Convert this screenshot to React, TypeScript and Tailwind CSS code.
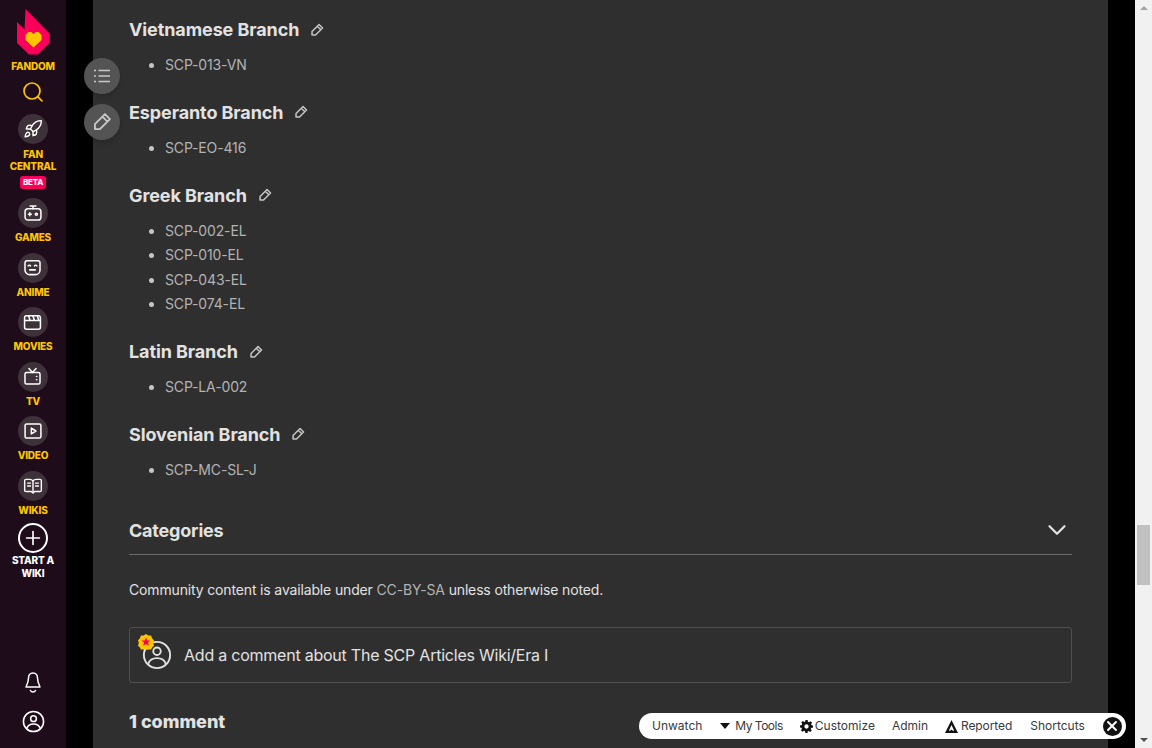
import { Search, Rocket, Plus, ChevronDown, X } from 'lucide-react';
import type { ReactNode } from 'react';

const font = "font-['Inter','Liberation_Sans',sans-serif]";

function GameIcon() {
  return (
    <svg viewBox="0 0 24 24" className="w-[20px] h-[20px]" fill="none" stroke="currentColor" strokeWidth="1.8" strokeLinejoin="round" strokeLinecap="round">
      <rect x="2.500" y="7" width="19" height="13.500" rx="3.500" />
      <path d="M12 7V3.500M8.500 3.500h7" />
      <path d="M6.500 13.500h3.500M8.200 11.800v3.400" />
      <circle cx="16" cy="13.500" r="1.300" />
    </svg>
  );
}

function AnimeIcon() {
  return (
    <svg viewBox="0 0 24 24" className="w-[19px] h-[19px]" fill="none" stroke="currentColor" strokeWidth="1.9" strokeLinecap="round" strokeLinejoin="round">
      <path d="M5 3.500h14a2.500 2.500 0 0 1 2.500 2.500v9a6 6 0 0 1-6 6h-7a6 6 0 0 1-6-6V6A2.500 2.500 0 0 1 5 3.500z" />
      <path d="M6.500 10c.7-1 2.300-1 3 0M14.500 10c.7-1 2.300-1 3 0M8.500 15h7" />
    </svg>
  );
}

function MovieIcon() {
  return (
    <svg viewBox="0 0 24 24" className="w-[19px] h-[19px]" fill="none" stroke="currentColor" strokeWidth="1.9" strokeLinejoin="round" strokeLinecap="round">
      <rect x="2" y="3.500" width="20" height="17" rx="2.500" />
      <path d="M2 9.500h20M7 3.500l2 6M12.500 3.500l2 6M18 3.500l2 6" />
    </svg>
  );
}

function TvIcon() {
  return (
    <svg viewBox="0 0 24 24" className="w-[19px] h-[19px]" fill="none" stroke="currentColor" strokeWidth="1.9" strokeLinejoin="round" strokeLinecap="round">
      <rect x="2.500" y="7" width="19" height="14.500" rx="2" />
      <path d="M7.500 2l4.500 5 4.500-5" />
      <path d="M17 12h.5M17 16h.5" />
    </svg>
  );
}

function VideoIcon() {
  return (
    <svg viewBox="0 0 24 24" className="w-[20px] h-[20px]" fill="none" stroke="currentColor" strokeWidth="1.8" strokeLinejoin="round">
      <rect x="2.500" y="3.500" width="19" height="17" rx="2" />
      <path d="M10 8.500l5.500 3.500-5.500 3.500z" />
    </svg>
  );
}

function BookIcon() {
  return (
    <svg viewBox="0 0 24 24" className="w-[20px] h-[20px]" fill="none" stroke="currentColor" strokeWidth="1.700" strokeLinejoin="round" strokeLinecap="round">
      <path d="M12 6c-1-1.500-2.500-2-4-2H3.500A1.500 1.500 0 0 0 2 5.500V17a1.500 1.500 0 0 0 1.500 1.500H10l2 2 2-2h6.500A1.500 1.500 0 0 0 22 17V5.500A1.500 1.500 0 0 0 20.500 4H16c-1.500 0-3 .5-4 2zM12 6v12" />
      <path d="M5.500 8.500h3.500M5.500 12h3.500M15 8.500h3.500M15 12h3.500" />
    </svg>
  );
}

function BellIcon() {
  return (
    <svg viewBox="0 0 16 22" className="w-[16px] h-[22px] text-white" fill="none" stroke="currentColor" strokeWidth="1.500" strokeLinejoin="round" strokeLinecap="round">
      <path d="M8 1C5 1 3.500 3.500 3.500 6c0 3-1 6-2.500 9h14c-1.500-3-2.500-6-2.500-9C12.500 3.500 11 1 8 1z" />
      <path d="M5.500 18.500c.8 2 4.200 2 5 0" />
    </svg>
  );
}

function PencilIcon({ className, strokeWidth = 2.200 }: { className: string; strokeWidth?: number }) {
  return (
    <svg viewBox="0 0 24 24" className={className} fill="none" stroke="currentColor" strokeWidth={strokeWidth} strokeLinejoin="round">
      <path d="M3.500 20.500v-6L15.500 2.500l6 6-12 12zM12.500 5.500l6 6" />
    </svg>
  );
}

function UserIcon({ className, strokeWidth = 1.600 }: { className: string; strokeWidth?: number }) {
  return (
    <svg viewBox="0 0 24 24" className={className} fill="none" stroke="currentColor" strokeWidth={strokeWidth} strokeLinecap="round">
      <circle cx="12" cy="12" r="10.500" />
      <circle cx="12" cy="9" r="3" />
      <path d="M5 19c1-3 4-4.500 7-4.500s6 1.500 7 4.500" />
    </svg>
  );
}

const navItems: { label: string; icon: ReactNode }[] = [
  { label: 'GAMES', icon: <GameIcon /> },
  { label: 'ANIME', icon: <AnimeIcon /> },
  { label: 'MOVIES', icon: <MovieIcon /> },
  { label: 'TV', icon: <TvIcon /> },
  { label: 'VIDEO', icon: <VideoIcon /> },
  { label: 'WIKIS', icon: <BookIcon /> },
];

function Sidebar() {
  return (
    <aside className="w-[66px] shrink-0 h-full bg-[#1e0c1b] flex flex-col items-center tracking-[-0.2px]">
      <svg viewBox="0 0 34 46" className="w-[34px] h-[46px] mt-[9px]">
        <g transform="translate(1 0)">
          <path d="M8.500 0L32.500 24.500V34L21 45.500H12L0 34V13L7.500 20.500z" fill="#fa005a" />
          <path d="M16.500 38.500L8.500 31v-5l3-3h2.800l2.200 2 2.200-2H21.500l3 3v5z" fill="#ffc500" />
        </g>
      </svg>
      <span className="mt-[5px] text-[10px] leading-[13px] font-extrabold text-[#ffc500]">FANDOM</span>
      <Search className="mt-[7px] w-[24px] h-[24px] text-[#ffc500]" strokeWidth={1.700} />
      <div className="mt-[10px] w-[30px] h-[30px] rounded-full bg-[#3e3139] text-white flex items-center justify-center">
        <Rocket className="w-[20px] h-[20px]" strokeWidth={1.700} />
      </div>
      <span className="mt-[4px] text-[10px] leading-[12px] font-extrabold text-[#ffc500] text-center">FAN<br />CENTRAL</span>
      <span className="mt-[4px] rounded-[3px] bg-[#fa005a] px-[3px] text-[8px] leading-[13px] font-extrabold text-white">BETA</span>
      <div className="mt-[9px] flex flex-col items-center">
        {navItems.map((item) => (
          <div key={item.label} className="h-[54.500px] flex flex-col items-center">
            <div className="w-[30px] h-[30px] rounded-full bg-[#3e3139] text-white flex items-center justify-center">
              {item.icon}
            </div>
            <span className="mt-[3px] text-[10px] leading-[13px] font-extrabold text-[#ffc500]">{item.label}</span>
          </div>
        ))}
      </div>
      <div className="-mt-[2px] w-[30px] h-[30px] rounded-full border-2 border-white text-white flex items-center justify-center">
        <Plus className="w-[22px] h-[22px]" strokeWidth={1.800} />
      </div>
      <span className="mt-[1px] text-[10px] leading-[13px] font-extrabold text-white text-center whitespace-nowrap">START A<br />WIKI</span>
      <div className="mt-auto">
        <BellIcon />
      </div>
      <UserIcon className="mt-[16px] mb-[15px] w-[23px] h-[23px] text-white" />
    </aside>
  );
}

const sections = [
  { title: 'Vietnamese Branch', items: ['SCP-013-VN'] },
  { title: 'Esperanto Branch', items: ['SCP-EO-416'] },
  { title: 'Greek Branch', items: ['SCP-002-EL', 'SCP-010-EL', 'SCP-043-EL', 'SCP-074-EL'] },
  { title: 'Latin Branch', items: ['SCP-LA-002'] },
  { title: 'Slovenian Branch', items: ['SCP-MC-SL-J'] },
];

function Article() {
  return (
    <main className="w-[1015px] shrink-0 h-full overflow-hidden bg-[#2f2f2f] pl-[36px] pr-[36px] pt-[17px]">
      {sections.map((section) => (
        <section key={section.title} className="mb-[22.200px]">
          <h2 className="flex items-center gap-[11px] text-[18px] leading-[25px] font-bold tracking-[-0.1px] text-[#e2e2e2]">
            {section.title}
            <PencilIcon className="w-[14px] h-[14px] text-[#c5c5c5]" strokeWidth={2.600} />
          </h2>
          <ul className="mt-[11px] pl-[36px] list-disc text-[14px] leading-[24.600px] tracking-[-0.15px] text-[#b3b3b3] marker:text-[#c5c5c5]">
            {section.items.map((item) => (
              <li key={item}>{item}</li>
            ))}
          </ul>
        </section>
      ))}
      <div className="mt-[35px] flex items-center justify-between border-b border-[#6a6a6a] pb-[11px]">
        <h2 className="text-[18px] leading-[25px] font-bold tracking-[-0.2px] text-[#e2e2e2]">Categories</h2>
        <ChevronDown className="w-[30px] h-[30px] -my-1 text-[#e2e2e2]" strokeWidth={1.800} />
      </div>
      <p className="mt-[25px] text-[14px] leading-[20px] tracking-[-0.15px] text-[#e2e2e2]">
        Community content is available under <span className="text-[#b3b3b3]">CC-BY-SA</span> unless otherwise noted.
      </p>
      <div className="mt-[27px] h-[56px] rounded-[3px] border border-[#4f4f4f] flex items-center pl-[12px] gap-[12px]">
        <div className="relative mt-[1px] w-[30px] h-[30px] text-[#e2e2e2]">
          <UserIcon className="w-[30px] h-[30px]" strokeWidth={1.500} />
          <svg viewBox="0 0 16 16" className="absolute -left-[4px] -top-[6px] w-[16px] h-[16px]">
            <path d="M8 0l2.300 1.600 2.800 0 .9 2.600L16 6.300l-.8 2.700.8 2.700-2 1.700-.9 2.100-2.800-.1L8 16l-2.300-.6-2.800.1L2 13.400 0 11.700.8 9 0 6.300l2-2.100.9-2.600 2.800 0z" fill="#ffc500" />
            <path d="M8 3.500l1.300 3h3.200l-2.500 2 .9 3.200L8 9.900l-2.900 1.800.9-3.200-2.500-2h3.200z" fill="#fa005a" />
          </svg>
        </div>
        <span className="text-[16px] tracking-[-0.23px] text-[#e2e2e2]">Add a comment about The SCP Articles Wiki/Era I</span>
      </div>
      <h2 className="mt-[26px] text-[18px] leading-[25px] font-extrabold text-[#e2e2e2]">1 comment</h2>
    </main>
  );
}

function Toolbar() {
  return (
    <div className="absolute left-[639px] top-[713px] h-[26px] rounded-full bg-white pl-[13px] pr-[4px] flex items-center text-[12px] text-[#3a3a3a] whitespace-nowrap">
      <span>Unwatch</span>
      <svg viewBox="0 0 10 6" className="ml-[18px] mr-[5px] w-[10px] h-[6px]">
        <path d="M0 0h10L5 6z" fill="#111" />
      </svg>
      <span className="tracking-[-0.5px]">My Tools</span>
      <svg viewBox="0 0 24 24" className="ml-[17px] mr-[2px] w-[13px] h-[13px]">
        <path fillRule="evenodd" fill="#111" d="M10 0h4l.7 3.300 2 .8L19.500 2.300l2.800 2.800-1.800 2.800.8 2L24 10v4l-3.300.7-.8 2 1.800 2.800-2.800 2.800-2.800-1.800-2 .8L14 24h-4l-.7-3.300-2-.8-2.800 1.800-2.800-2.800 1.800-2.800-.8-2L0 14v-4l3.300-.7.8-2-1.800-2.800 2.800-2.800 2.800 1.800 2-.8zM12 8a4 4 0 1 0 0 8 4 4 0 0 0 0-8z" />
      </svg>
      <span>Customize</span>
      <span className="ml-[17px]">Admin</span>
      <svg viewBox="0 0 24 24" className="ml-[17px] mr-[3px] w-[13px] h-[13px]">
        <path fillRule="evenodd" fill="#111" d="M12 0l12 24H0zM12 9L7 20h3l.7-2h2.600l.7 2h3z" />
      </svg>
      <span className="tracking-[-0.1px]">Reported</span>
      <span className="ml-[18px]">Shortcuts</span>
      <div className="ml-[18px] w-[19px] h-[19px] rounded-full bg-[#111] text-white flex items-center justify-center">
        <X className="w-[16px] h-[16px]" strokeWidth={2.800} />
      </div>
    </div>
  );
}

function Scrollbar() {
  return (
    <div className="w-[17px] shrink-0 h-full bg-[#f1f1f1] flex flex-col items-center">
      <svg viewBox="0 0 8 4" className="mt-[6px] w-[8px] h-[4px]">
        <path d="M0 4h8L4 0z" fill="#a3a3a3" />
      </svg>
      <div className="mt-[515px] w-[13px] h-[60px] bg-[#c1c1c1]" />
      <svg viewBox="0 0 8 4" className="mt-auto mb-[6px] w-[8px] h-[4px]">
        <path d="M0 0h8L4 4z" fill="#505050" />
      </svg>
    </div>
  );
}

export default function App() {
  return (
    <div className={`relative w-[1152px] h-[748px] overflow-hidden flex bg-black ${font}`}>
      <Sidebar />
      <div className="w-[27px] shrink-0" />
      <Article />
      <div className="w-[27px] shrink-0" />
      <Scrollbar />
      <button className="absolute left-[84px] top-[58px] w-[36px] h-[36px] rounded-full bg-[#545454] text-[#c8c8c8] flex items-center justify-center shadow-md">
        <svg viewBox="0 0 16 14" className="w-[16px] h-[14px]" stroke="currentColor" strokeWidth="1.600">
          <path d="M4.500 1.500H16M4.500 7H16M4.500 12.500H16M0 1.500h2M0 7h2M0 12.500h2" />
        </svg>
      </button>
      <button className="absolute left-[84px] top-[104px] w-[36px] h-[36px] rounded-full bg-[#545454] text-[#c8c8c8] flex items-center justify-center shadow-md">
        <PencilIcon className="w-[20px] h-[20px]" />
      </button>
      <Toolbar />
    </div>
  );
}
